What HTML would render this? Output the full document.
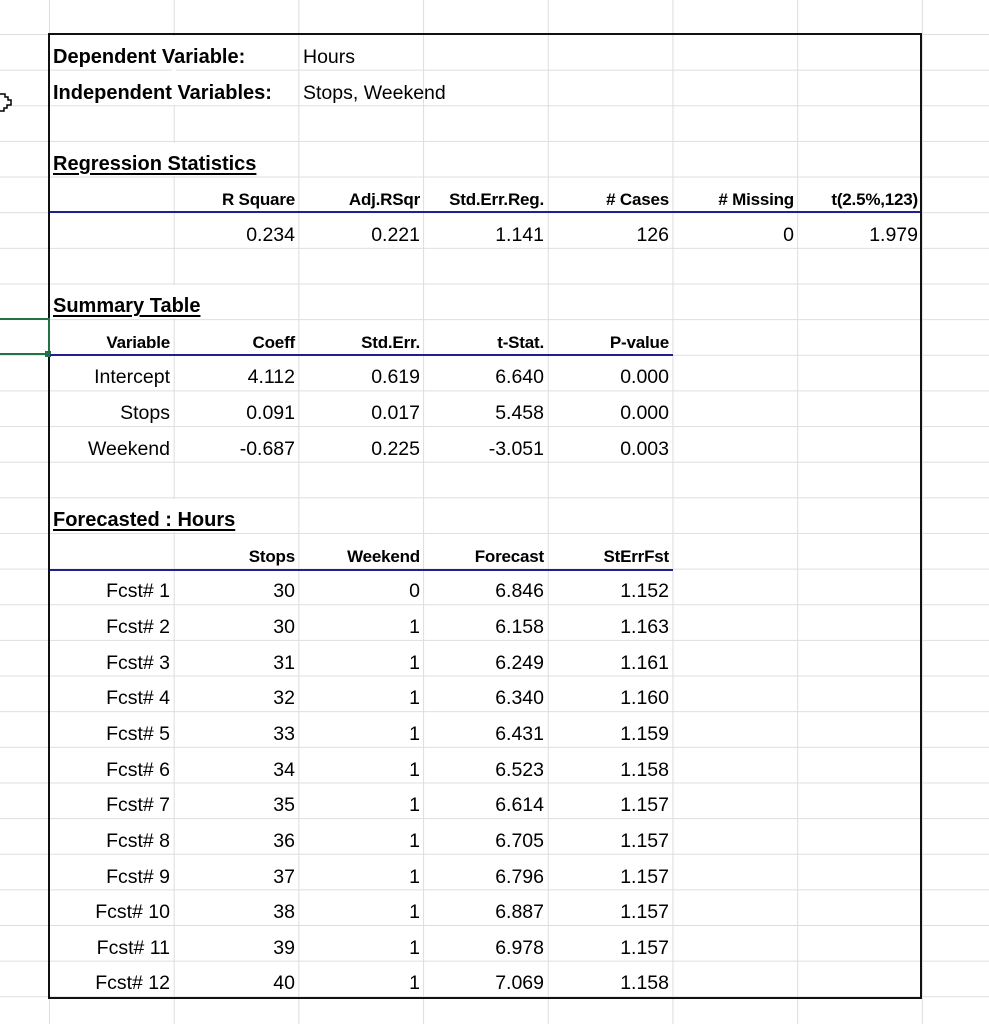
<!DOCTYPE html>
<html><head><meta charset="utf-8"><style>
html,body{margin:0;padding:0;background:#fff;}
body{width:989px;height:1024px;position:relative;overflow:hidden;font-family:"Liberation Sans",sans-serif;color:#000;}
.grid{position:absolute;left:0;top:0;width:989px;height:1024px;
background-image:
linear-gradient(to right,#dedede 1px,transparent 1px),
linear-gradient(to bottom,#dedede 1px,transparent 1px);
background-size:124.7px 1024px,989px 35.65px;
background-position:49px 0,0 -1.65px;}
.c{position:absolute;height:35.65px;line-height:35.65px;white-space:nowrap;font-size:19.5px;box-sizing:border-box;padding-top:6px;font-family:"Liberation Sans",sans-serif}
.r{text-align:right;padding-right:4px}
.h{font-weight:bold;font-size:17px;letter-spacing:-0.2px}
.t{font-weight:bold;font-size:20px;text-decoration:underline;text-decoration-thickness:2px;text-underline-offset:3px}
.b{font-weight:bold;font-size:20px}
.w{position:absolute;background:#fff}
.blue{position:absolute;height:2px;background:#1f1f8f}
</style></head><body>
<div class="grid"></div>
<div class="w" style="left:172px;top:36px;width:4px;height:69px"></div>
<div class="w" style="left:172px;top:143px;width:4px;height:33px"></div>
<div class="w" style="left:172px;top:285px;width:4px;height:33px"></div>
<div class="w" style="left:172px;top:499px;width:4px;height:33px"></div>
<div style="position:absolute;left:48px;top:33px;width:870px;height:962px;border:2px solid #111"></div>
<div style="position:absolute;left:-2px;top:318px;width:52px;height:37px;border:2px solid #217346;box-sizing:border-box"></div>
<div style="position:absolute;left:45px;top:351px;width:6px;height:6px;background:#217346"></div>
<svg style="position:absolute;left:0;top:92px" width="14" height="20" viewBox="0 0 14 20"><path d="M0 2H5V5H8V8H11V13H7V16H4V19H0" fill="#fff" stroke="#000" stroke-width="1.5"/></svg>
<div class="blue" style="left:50px;top:211px;width:870px"></div>
<div class="blue" style="left:50px;top:354px;width:623px"></div>
<div class="blue" style="left:50px;top:569px;width:623px"></div>

<div class="c b" style="left:53px;top:34px">Dependent Variable:</div>
<div class="c" style="left:303px;top:34px">Hours</div>
<div class="c b" style="left:53px;top:69.6px">Independent Variables:</div>
<div class="c" style="left:303px;top:69.6px">Stops, Weekend</div>

<div class="c t" style="left:53px;top:140.8px">Regression Statistics</div>
<div class="c r h" style="left:174px;width:125px;top:176.4px">R Square</div>
<div class="c r h" style="left:299px;width:125px;top:176.4px">Adj.RSqr</div>
<div class="c r h" style="left:424px;width:124px;top:176.4px">Std.Err.Reg.</div>
<div class="c r h" style="left:548px;width:125px;top:176.4px"># Cases</div>
<div class="c r h" style="left:673px;width:125px;top:176.4px"># Missing</div>
<div class="c r h" style="left:798px;width:124px;top:176.4px">t(2.5%,123)</div>
<div class="c r" style="left:174px;width:125px;top:212px">0.234</div>
<div class="c r" style="left:299px;width:125px;top:212px">0.221</div>
<div class="c r" style="left:424px;width:124px;top:212px">1.141</div>
<div class="c r" style="left:548px;width:125px;top:212px">126</div>
<div class="c r" style="left:673px;width:125px;top:212px">0</div>
<div class="c r" style="left:798px;width:124px;top:212px">1.979</div>

<div class="c t" style="left:53px;top:283.2px">Summary Table</div>
<div class="c r h" style="left:49px;width:125px;top:318.8px">Variable</div>
<div class="c r h" style="left:174px;width:125px;top:318.8px">Coeff</div>
<div class="c r h" style="left:299px;width:125px;top:318.8px">Std.Err.</div>
<div class="c r h" style="left:424px;width:124px;top:318.8px">t-Stat.</div>
<div class="c r h" style="left:548px;width:125px;top:318.8px">P-value</div>

<div class="c r" style="left:49px;width:125px;top:354.4px">Intercept</div>
<div class="c r" style="left:174px;width:125px;top:354.4px">4.112</div>
<div class="c r" style="left:299px;width:125px;top:354.4px">0.619</div>
<div class="c r" style="left:424px;width:124px;top:354.4px">6.640</div>
<div class="c r" style="left:548px;width:125px;top:354.4px">0.000</div>
<div class="c r" style="left:49px;width:125px;top:390px">Stops</div>
<div class="c r" style="left:174px;width:125px;top:390px">0.091</div>
<div class="c r" style="left:299px;width:125px;top:390px">0.017</div>
<div class="c r" style="left:424px;width:124px;top:390px">5.458</div>
<div class="c r" style="left:548px;width:125px;top:390px">0.000</div>
<div class="c r" style="left:49px;width:125px;top:425.7px">Weekend</div>
<div class="c r" style="left:174px;width:125px;top:425.7px">-0.687</div>
<div class="c r" style="left:299px;width:125px;top:425.7px">0.225</div>
<div class="c r" style="left:424px;width:124px;top:425.7px">-3.051</div>
<div class="c r" style="left:548px;width:125px;top:425.7px">0.003</div>

<div class="c t" style="left:53px;top:497px">Forecasted : Hours</div>
<div class="c r h" style="left:174px;width:125px;top:532.6px">Stops</div>
<div class="c r h" style="left:299px;width:125px;top:532.6px">Weekend</div>
<div class="c r h" style="left:424px;width:124px;top:532.6px">Forecast</div>
<div class="c r h" style="left:548px;width:125px;top:532.6px">StErrFst</div>

<div class="c r" style="left:49px;width:125px;top:568.3px">Fcst# 1</div><div class="c r" style="left:174px;width:125px;top:568.3px">30</div><div class="c r" style="left:299px;width:125px;top:568.3px">0</div><div class="c r" style="left:424px;width:124px;top:568.3px">6.846</div><div class="c r" style="left:548px;width:125px;top:568.3px">1.152</div>
<div class="c r" style="left:49px;width:125px;top:603.9px">Fcst# 2</div><div class="c r" style="left:174px;width:125px;top:603.9px">30</div><div class="c r" style="left:299px;width:125px;top:603.9px">1</div><div class="c r" style="left:424px;width:124px;top:603.9px">6.158</div><div class="c r" style="left:548px;width:125px;top:603.9px">1.163</div>
<div class="c r" style="left:49px;width:125px;top:639.6px">Fcst# 3</div><div class="c r" style="left:174px;width:125px;top:639.6px">31</div><div class="c r" style="left:299px;width:125px;top:639.6px">1</div><div class="c r" style="left:424px;width:124px;top:639.6px">6.249</div><div class="c r" style="left:548px;width:125px;top:639.6px">1.161</div>
<div class="c r" style="left:49px;width:125px;top:675.2px">Fcst# 4</div><div class="c r" style="left:174px;width:125px;top:675.2px">32</div><div class="c r" style="left:299px;width:125px;top:675.2px">1</div><div class="c r" style="left:424px;width:124px;top:675.2px">6.340</div><div class="c r" style="left:548px;width:125px;top:675.2px">1.160</div>
<div class="c r" style="left:49px;width:125px;top:710.9px">Fcst# 5</div><div class="c r" style="left:174px;width:125px;top:710.9px">33</div><div class="c r" style="left:299px;width:125px;top:710.9px">1</div><div class="c r" style="left:424px;width:124px;top:710.9px">6.431</div><div class="c r" style="left:548px;width:125px;top:710.9px">1.159</div>
<div class="c r" style="left:49px;width:125px;top:746.5px">Fcst# 6</div><div class="c r" style="left:174px;width:125px;top:746.5px">34</div><div class="c r" style="left:299px;width:125px;top:746.5px">1</div><div class="c r" style="left:424px;width:124px;top:746.5px">6.523</div><div class="c r" style="left:548px;width:125px;top:746.5px">1.158</div>
<div class="c r" style="left:49px;width:125px;top:782.2px">Fcst# 7</div><div class="c r" style="left:174px;width:125px;top:782.2px">35</div><div class="c r" style="left:299px;width:125px;top:782.2px">1</div><div class="c r" style="left:424px;width:124px;top:782.2px">6.614</div><div class="c r" style="left:548px;width:125px;top:782.2px">1.157</div>
<div class="c r" style="left:49px;width:125px;top:817.8px">Fcst# 8</div><div class="c r" style="left:174px;width:125px;top:817.8px">36</div><div class="c r" style="left:299px;width:125px;top:817.8px">1</div><div class="c r" style="left:424px;width:124px;top:817.8px">6.705</div><div class="c r" style="left:548px;width:125px;top:817.8px">1.157</div>
<div class="c r" style="left:49px;width:125px;top:853.5px">Fcst# 9</div><div class="c r" style="left:174px;width:125px;top:853.5px">37</div><div class="c r" style="left:299px;width:125px;top:853.5px">1</div><div class="c r" style="left:424px;width:124px;top:853.5px">6.796</div><div class="c r" style="left:548px;width:125px;top:853.5px">1.157</div>
<div class="c r" style="left:49px;width:125px;top:889.1px">Fcst# 10</div><div class="c r" style="left:174px;width:125px;top:889.1px">38</div><div class="c r" style="left:299px;width:125px;top:889.1px">1</div><div class="c r" style="left:424px;width:124px;top:889.1px">6.887</div><div class="c r" style="left:548px;width:125px;top:889.1px">1.157</div>
<div class="c r" style="left:49px;width:125px;top:924.8px">Fcst# 11</div><div class="c r" style="left:174px;width:125px;top:924.8px">39</div><div class="c r" style="left:299px;width:125px;top:924.8px">1</div><div class="c r" style="left:424px;width:124px;top:924.8px">6.978</div><div class="c r" style="left:548px;width:125px;top:924.8px">1.157</div>
<div class="c r" style="left:49px;width:125px;top:960.4px">Fcst# 12</div><div class="c r" style="left:174px;width:125px;top:960.4px">40</div><div class="c r" style="left:299px;width:125px;top:960.4px">1</div><div class="c r" style="left:424px;width:124px;top:960.4px">7.069</div><div class="c r" style="left:548px;width:125px;top:960.4px">1.158</div>
</body></html>
